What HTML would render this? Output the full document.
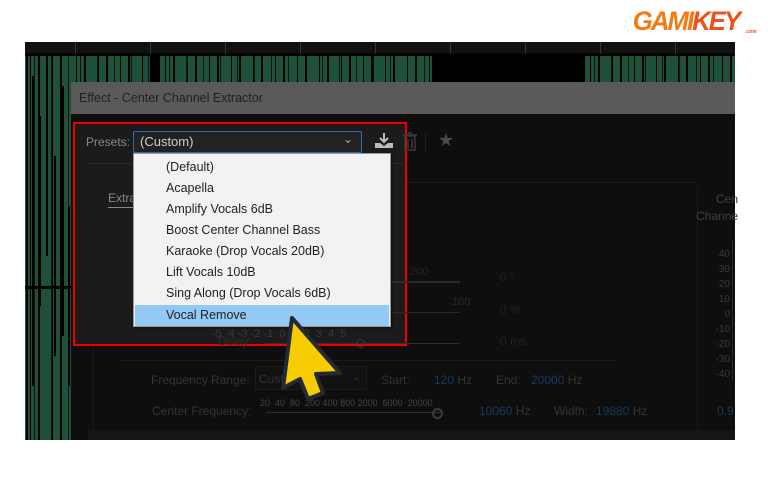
<!DOCTYPE html>
<html><head><meta charset="utf-8"><style>
*{margin:0;padding:0;box-sizing:border-box}
body{width:768px;height:480px;background:#fff;position:relative;overflow:hidden;font-family:"Liberation Sans",sans-serif}
.a{position:absolute}
.t{position:absolute;white-space:nowrap;font-size:11px;color:#333}
.t.b{color:#17385e}
.item{position:absolute;left:0;width:256px;height:21px;font-size:12.5px;color:#222;padding-left:32px;line-height:21px}
.wave{background:
repeating-linear-gradient(90deg,transparent 0 5px,#000 5px 6px,transparent 6px 13px,#000 13px 15px,transparent 15px 22px),
repeating-linear-gradient(90deg,transparent 0 9px,rgba(0,0,0,.7) 9px 10px,transparent 10px 17px),
#1f5039}
</style></head><body>
<!-- logo -->
<div class="t" style="left:630px;top:6px;font-size:27px;font-weight:bold;font-style:italic;color:#f47a14;letter-spacing:-2px;transform:scaleX(0.95)">GAMI<span style="color:#f0501a">KEY</span></div>
<div class="t" style="left:745px;top:29px;font-size:5px;color:#f0501a;font-weight:bold">.com</div>
<!-- screen -->
<div class="a" style="left:25px;top:42px;width:710px;height:398px;background:#000"></div>
<div class="a" style="left:25px;top:42px;width:710px;height:12px;background:#111;border-bottom:1px solid #0a0a0a"></div>
<div class="a" style="left:25px;top:42px;width:710px;height:12px;background:repeating-linear-gradient(90deg,transparent 0 50px,#333 50px 51px,transparent 51px 75px)"></div>
<div class="a wave" style="left:25px;top:56px;width:46px;height:384px"></div>
<div class="a wave" style="left:71px;top:56px;width:80px;height:26px"></div>
<div class="a wave" style="left:160px;top:56px;width:272px;height:26px"></div>
<div class="a wave" style="left:585px;top:56px;width:150px;height:26px"></div>
<svg class="a" style="left:25px;top:56px" width="46" height="384"><path d="M2 0V384M8 20V330M15 60V250M22 0V200M30 100V300M38 30V280M44 150V330" stroke="#000" stroke-width="2"/><rect x="0" y="230" width="46" height="3" fill="#000"/></svg>
<!-- dialog -->
<div class="a" style="left:71px;top:82px;width:664px;height:32px;background:#5a5a5a"></div>
<div class="t" style="left:79px;top:91px;font-size:12.5px;color:#222">Effect - Center Channel Extractor</div>
<div class="a" style="left:71px;top:114px;width:664px;height:326px;background:#0e0e0e"></div>
<div class="a" style="left:93px;top:182px;width:605px;height:250px;border:1px solid #181818;border-radius:3px"></div>
<div class="a" style="left:88px;top:430px;width:647px;height:10px;background:#151515"></div>
<div class="a" style="left:74px;top:123px;width:332px;height:222px;background:#1b1b1b"></div>
<div class="a" style="left:73px;top:122px;width:334px;height:224px;border:2px solid #e00"></div>
<div class="t" style="left:86px;top:135px;font-size:12px;color:#888">Presets:</div>
<div class="a" style="left:133px;top:131px;width:229px;height:22px;border:1px solid #2c6fb0;border-radius:2px;background:#222"></div>
<div class="t" style="left:140px;top:134px;font-size:13px;color:#ccc">(Custom)</div>
<div class="t" style="left:343px;top:132px;font-size:12px;color:#aaa">⌄</div>
<svg class="a" style="left:373px;top:132px" width="22" height="18"><path d="M11 1v9M7 6l4 4 4-4" stroke="#bbb" stroke-width="2" fill="none"/><path d="M2 11h5l4 3 4-3h5v5H2z" fill="#bbb"/></svg>
<svg class="a" style="left:402px;top:132px" width="16" height="20"><rect x="3" y="4" width="10" height="14" fill="none" stroke="#3a3a3a" stroke-width="1.5"/><path d="M1 3h14M6 1h4M6 7v9M10 7v9" stroke="#3a3a3a" stroke-width="1.5"/></svg>
<div class="a" style="left:425px;top:132px;width:1px;height:20px;background:#1e1e1e"></div>
<div class="t" style="left:438px;top:130px;font-size:18px;color:#4a4a4a">★</div>
<div class="a" style="left:88px;top:163px;width:318px;height:1px;background:#292929"></div>
<div class="t" style="left:108px;top:191px;font-size:12px;color:#888">Extra</div>
<div class="a" style="left:108px;top:207px;width:30px;height:1px;background:#888"></div>
<!-- sliders behind -->
<div class="t" style="left:410px;top:266px;color:#262626">200</div>
<div class="a" style="left:390px;top:281px;width:70px;height:2px;background:#2a2a2a"></div>
<div class="t" style="left:500px;top:270px;font-size:12px;color:#222">0 °</div>
<div class="t" style="left:452px;top:296px;color:#262626">100</div>
<div class="a" style="left:390px;top:312px;width:70px;height:1px;background:#2a2a2a"></div>
<div class="t" style="left:500px;top:303px;font-size:12px;color:#222">0 %</div>
<div class="t" style="left:212px;top:328px;color:#3a3a3a">-5 -4 -3 -2 -1 &nbsp;0 &nbsp;1 &nbsp;2 &nbsp;3 &nbsp;4 &nbsp;5</div>
<div class="t" style="left:218px;top:334px;font-size:12px;color:#2e2e2e">Delay:</div>
<div class="a" style="left:264px;top:343px;width:196px;height:1px;background:#2e2e2e"></div>
<div class="a" style="left:356px;top:339px;width:9px;height:9px;border:1px solid #3a3a3a;border-radius:50%"></div>
<div class="t" style="left:500px;top:334px;font-size:12px;color:#222">0 ms</div>
<div class="a" style="left:120px;top:360px;width:495px;height:1px;background:#1a1a1a"></div>
<div class="t" style="left:151px;top:373px;font-size:12px">Frequency Range:</div>
<div class="a" style="left:255px;top:366px;width:112px;height:24px;border:1px solid #1c1c1c;background:#111"></div>
<div class="t" style="left:259px;top:372px;font-size:12px">Custom</div>
<div class="t" style="left:352px;top:370px;font-size:11px">⌄</div>
<div class="t" style="left:381px;top:373px;font-size:12px">Start:</div>
<div class="t b" style="left:434px;top:373px;font-size:12px">120 <span style="color:#333">Hz</span></div>
<div class="t" style="left:496px;top:373px;font-size:12px">End:</div>
<div class="t b" style="left:531px;top:373px;font-size:12px">20000 <span style="color:#333">Hz</span></div>
<div class="t" style="left:260px;top:398px;font-size:9px;color:#444">20 &nbsp;40 &nbsp;80 &nbsp;200 400 800 2000 &nbsp;6000 &nbsp;20000</div>
<div class="t" style="left:152px;top:404px;font-size:12px">Center Frequency:</div>
<div class="a" style="left:266px;top:412px;width:175px;height:1px;background:#2e2e2e"></div>
<div class="a" style="left:432px;top:408px;width:11px;height:11px;border:2px solid #3a3a3a;border-radius:50%"></div>
<div class="t b" style="left:479px;top:404px;font-size:12px">10060 <span style="color:#333">Hz</span></div>
<div class="t" style="left:554px;top:404px;font-size:12px">Width:</div>
<div class="t b" style="left:596px;top:404px;font-size:12px">19880 <span style="color:#333">Hz</span></div>
<div class="t b" style="left:717px;top:404px;font-size:12px">0.9</div>
<!-- right meter -->
<div class="t" style="left:716px;top:192px;font-size:12px;color:#3e3e3e">Cen</div>
<div class="t" style="left:696px;top:209px;font-size:12px;color:#3e3e3e">Channe</div>
<div class="a" style="left:732px;top:240px;width:1px;height:140px;background:#2a2a2a"></div>
<div class="t" style="left:712px;top:247px;font-size:10px;line-height:15px;color:#3a3a3a;text-align:right;width:18px">40<br>30<br>20<br>10<br>0<br>-10<br>-20<br>-30<br>-40</div>
<!-- dropdown -->
<div class="a" style="left:133px;top:153px;width:258px;height:174px;background:#f2f2f2;border:1px solid #999;box-shadow:1px 1px 2px rgba(0,0,0,.5)">
<div class="item" style="top:3px">(Default)</div>
<div class="item" style="top:24px">Acapella</div>
<div class="item" style="top:45px">Amplify Vocals 6dB</div>
<div class="item" style="top:66px">Boost Center Channel Bass</div>
<div class="item" style="top:87px">Karaoke (Drop Vocals 20dB)</div>
<div class="item" style="top:108px">Lift Vocals 10dB</div>
<div class="item" style="top:129px">Sing Along (Drop Vocals 6dB)</div>
<div class="item" style="top:151px;left:1px;width:254px;height:21px;background:#92c9f5;padding-left:31px">Vocal Remove</div>
</div>
<!-- cursor -->
<svg class="a" style="left:0;top:0" width="768" height="480">
<path d="M292 318 L340 373 L316 374 L323 393 L308 399 L300 379 L283 388 Z" fill="#f7cc00" stroke="#222a33" stroke-width="4" stroke-linejoin="round"/>
</svg>
</body></html>
